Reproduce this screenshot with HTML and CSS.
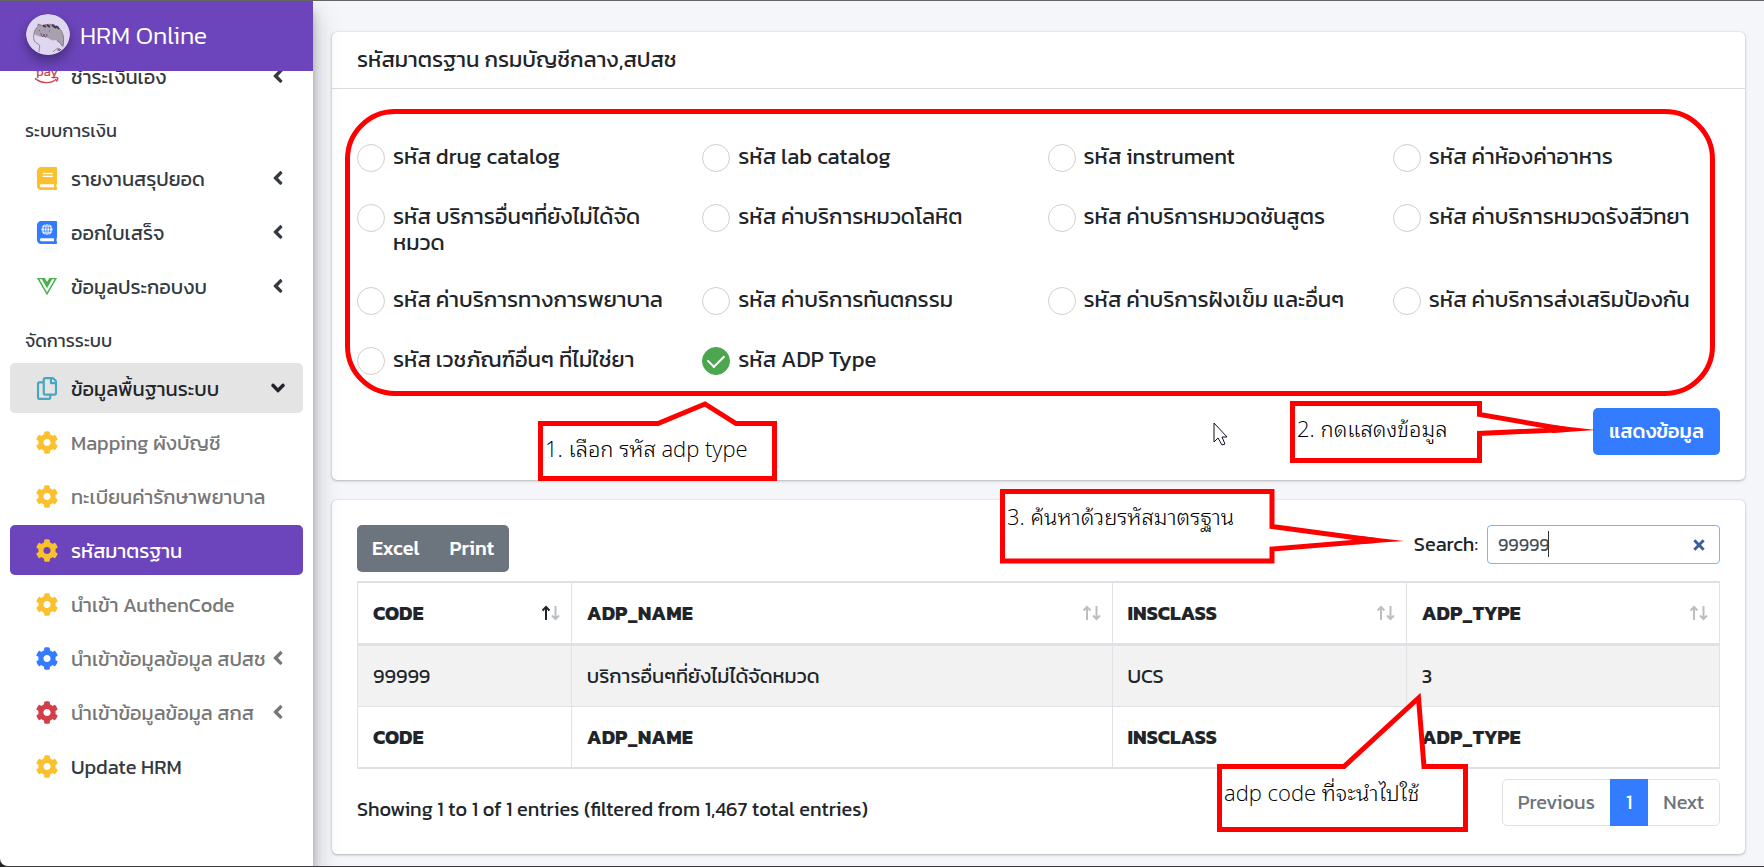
FILE: index.html
```html
<!DOCTYPE html>
<html lang="th">
<head>
<meta charset="utf-8">
<title>HRM Online</title>
<link rel="stylesheet" href="styles.css">
</head>
<body>
<svg class="defs" aria-hidden="true">
  <defs>
    <symbol id="gear" viewBox="0 0 512 512"><path d="M487.400 315.700l-42.600-24.600c4.300-23.200 4.300-47 0-70.200l42.600-24.600c4.900-2.800 7.100-8.600 5.500-14-11.100-35.600-30-67.800-54.700-94.600-3.800-4.100-10-5.100-14.800-2.300L380.800 110c-17.900-15.400-38.500-27.300-60.800-35.100V25.800c0-5.600-3.900-10.500-9.400-11.700-36.700-8.200-74.300-7.800-109.200 0-5.500 1.200-9.400 6.100-9.400 11.700V75c-22.200 7.900-42.800 19.800-60.800 35.100L88.700 85.500c-4.900-2.800-11-1.900-14.800 2.300-24.700 26.700-43.600 58.900-54.700 94.600-1.700 5.400.6 11.200 5.500 14L67.300 221c-4.300 23.200-4.300 47 0 70.200l-42.600 24.600c-4.900 2.800-7.100 8.600-5.500 14 11.100 35.600 30 67.800 54.700 94.600 3.800 4.100 10 5.100 14.800 2.300l42.600-24.600c17.900 15.400 38.500 27.300 60.800 35.100v49.200c0 5.600 3.900 10.500 9.400 11.700 36.700 8.200 74.300 7.800 109.200 0 5.500-1.200 9.400-6.100 9.400-11.700v-49.200c22.200-7.900 42.800-19.800 60.800-35.100l42.600 24.600c4.900 2.800 11 1.900 14.800-2.300 24.700-26.700 43.600-58.900 54.700-94.600 1.500-5.500-.7-11.300-5.600-14.100zM256 336c-44.100 0-80-35.900-80-80s35.900-80 80-80 80 35.900 80 80-35.900 80-80 80z"/></symbol>
    <symbol id="angle" viewBox="0 0 256 512"><path d="M31.700 239l136-136c9.400-9.400 24.600-9.400 33.900 0l22.600 22.600c9.400 9.400 9.400 24.600 0 33.900L127.900 256l96.400 96.400c9.400 9.400 9.400 24.600 0 33.900L201.700 409c-9.400 9.400-24.600 9.400-33.900 0l-136-136c-9.500-9.400-9.500-24.600-.1-34z"/></symbol>
    <symbol id="sort" viewBox="0 0 20 16"><path class="sort-up" d="M5 15V2M1.500 5.500L5 2l3.500 3.500"/><path class="sort-down" d="M14.500 1v13M11 10.500l3.500 3.500 3.500-3.500"/></symbol>
  </defs>
</svg>
<div class="app">
  <aside class="sidebar">
    <a class="brand" href="#">
      <svg class="avatar" viewBox="0 0 44 41" aria-hidden="true">
        <ellipse cx="22" cy="20.500" rx="22" ry="20.500" fill="#dfd7ef"/>
        <path d="M8 20c0-3 2-6 4-7.500V10l4 1.500c4-1.500 9-1.500 13-.5l2 1 2 0v2c3 3 5 8 5 13l-1 7c-2-4-4-7-8-8-4 2-6-3-11-3-4 0-8-2-10-3z" fill="#a8a0ae"/>
        <path d="M8 20c-1 5 0 8 4 10 3 1 1 4 1 8M8 20c0-3 2-6 4-7.500V10l4 1.500c4-1.500 9-1.500 13-.5M31 12c5 4 8 10 6 20M31 27c3 1 4 3 5 5M27 38c2-2 3-3 5-4" stroke="#7d6b80" stroke-width=".8" fill="none"/>
        <path d="M17 11.500l3 1.500M21 11l3 2M26 11l4 3M30 12l3 3" stroke="#3d2f48" stroke-width="1.700" fill="none"/>
        <path d="M15 19c0 4 3 5 3 1 0 4 3 4 3 0M13 16.500h1M23 17h1M31 36h2v-2M33 37l2-2" stroke="#6a4a62" fill="none"/>
      </svg>
      <span class="brand-name">HRM Online</span>
    </a>
    <nav class="menu-view">
      <ul class="menu">
        <li><a class="item" href="#"><svg class="icon red" viewBox="0 0 26 24"><text x="13" y="11" text-anchor="middle" font-size="14">pay</text><path d="M0 14c7 6 17 6 23 1M19 13.500c6-1.500 7 0 4 4" fill="none" stroke="currentColor" stroke-width="1.600"/></svg><span class="label">ชำระเงินเอง</span><svg class="angle"><use href="#angle"/></svg></a></li>
        <li class="heading">ระบบการเงิน</li>
        <li><a class="item" href="#"><svg class="icon yellow" viewBox="0 0 448 512"><path d="M448 360V24c0-13.300-10.700-24-24-24H96C43 0 0 43 0 96v320c0 53 43 96 96 96h328c13.300 0 24-10.700 24-24v-16c0-7.500-3.500-14.300-8.900-18.700-4.200-15.400-4.200-59.300 0-74.700 5.400-4.300 8.900-11.100 8.900-18.600zM128 134c0-3.300 2.700-6 6-6h212c3.300 0 6 2.700 6 6v20c0 3.300-2.700 6-6 6H134c-3.300 0-6-2.700-6-6v-20zm0 64c0-3.300 2.700-6 6-6h212c3.300 0 6 2.700 6 6v20c0 3.300-2.700 6-6 6H134c-3.300 0-6-2.700-6-6v-20zm253.400 250H96c-17.700 0-32-14.300-32-32 0-17.600 14.400-32 32-32h285.400c-1.900 17.100-1.900 46.900 0 64z"/></svg><span class="label">รายงานสรุปยอด</span><svg class="angle"><use href="#angle"/></svg></a></li>
        <li><a class="item" href="#"><svg class="icon blue" viewBox="0 0 448 512"><path d="M448 360V24c0-13.300-10.700-24-24-24H96C43 0 0 43 0 96v320c0 53 43 96 96 96h328c13.300 0 24-10.700 24-24v-16c0-7.500-3.500-14.300-8.900-18.700-4.200-15.400-4.200-59.300 0-74.700 5.400-4.300 8.900-11.100 8.900-18.600zM381.400 448H96c-17.700 0-32-14.300-32-32 0-17.600 14.400-32 32-32h285.400c-1.900 17.100-1.900 46.900 0 64z"/><circle cx="224" cy="188" r="122" fill="#fff"/><path d="M102 152h244M102 224h244M224 66v244M200 66c-46 70-46 174 0 244M248 66c46 70 46 174 0 244" fill="none" stroke="currentColor" stroke-width="17"/></svg><span class="label">ออกใบเสร็จ</span><svg class="angle"><use href="#angle"/></svg></a></li>
        <li><a class="item" href="#"><svg class="icon green" viewBox="0 0 448 512"><path d="M356.900 64.300H280l-56 88.600-48-88.600H0L224 448 448 64.300h-91.100zm-301.200 32h53.800L224 294.500 338.400 96.300h53.800L224 384.500 55.700 96.300z"/></svg><span class="label">ข้อมูลประกอบงบ</span><svg class="angle"><use href="#angle"/></svg></a></li>
        <li class="heading">จัดการระบบ</li>
        <li><a class="item open" href="#"><svg class="icon teal" viewBox="0 0 448 512"><path d="M433.900 65.900l-51.800-51.800A48 48 0 0 0 348.100 0H176c-26.500 0-48 21.500-48 48v48H48c-26.500 0-48 21.500-48 48v320c0 26.500 21.500 48 48 48h224c26.500 0 48-21.500 48-48v-48h80c26.500 0 48-21.500 48-48V99.900a48 48 0 0 0-14.100-34zM266 464H54a6 6 0 0 1-6-6V150a6 6 0 0 1 6-6h74v224c0 26.500 21.500 48 48 48h96v42a6 6 0 0 1-6 6zm128-96H182a6 6 0 0 1-6-6V54a6 6 0 0 1 6-6h106v88c0 13.300 10.700 24 24 24h88v202a6 6 0 0 1-6 6zm6-256h-64V48h9.600c1.600 0 3.100.6 4.200 1.800l48.400 48.400a6 6 0 0 1 1.800 4.200V112z"/></svg><span class="label">ข้อมูลพื้นฐานระบบ</span><svg class="angle down"><use href="#angle"/></svg></a></li>
        <li><a class="item sub" href="#"><svg class="icon yellow"><use href="#gear"/></svg><span class="label">Mapping ผังบัญชี</span></a></li>
        <li><a class="item sub" href="#"><svg class="icon yellow"><use href="#gear"/></svg><span class="label">ทะเบียนค่ารักษาพยาบาล</span></a></li>
        <li><a class="item active" href="#"><svg class="icon yellow"><use href="#gear"/></svg><span class="label">รหัสมาตรฐาน</span></a></li>
        <li><a class="item sub" href="#"><svg class="icon yellow"><use href="#gear"/></svg><span class="label">นำเข้า AuthenCode</span></a></li>
        <li><a class="item sub" href="#"><svg class="icon blue"><use href="#gear"/></svg><span class="label">นำเข้าข้อมูลข้อมูล สปสช</span><svg class="angle"><use href="#angle"/></svg></a></li>
        <li><a class="item sub" href="#"><svg class="icon red"><use href="#gear"/></svg><span class="label">นำเข้าข้อมูลข้อมูล สกส</span><svg class="angle"><use href="#angle"/></svg></a></li>
        <li><a class="item" href="#"><svg class="icon yellow"><use href="#gear"/></svg><span class="label">Update HRM</span></a></li>
      </ul>
    </nav>
  </aside>
  <main class="content">
    <form class="card">
      <h1 class="card-title">รหัสมาตรฐาน กรมบัญชีกลาง,สปสช</h1>
      <div class="card-body">
        <div class="options">
          <label class="option"><input type="radio" name="code"><span>รหัส drug catalog</span></label>
          <label class="option"><input type="radio" name="code"><span>รหัส lab catalog</span></label>
          <label class="option"><input type="radio" name="code"><span>รหัส instrument</span></label>
          <label class="option"><input type="radio" name="code"><span>รหัส ค่าห้องค่าอาหาร</span></label>
          <label class="option"><input type="radio" name="code"><span>รหัส บริการอื่นๆที่ยังไม่ได้จัด<wbr>หมวด</span></label>
          <label class="option"><input type="radio" name="code"><span>รหัส ค่าบริการหมวดโลหิต</span></label>
          <label class="option"><input type="radio" name="code"><span>รหัส ค่าบริการหมวดชันสูตร</span></label>
          <label class="option"><input type="radio" name="code"><span>รหัส ค่าบริการหมวดรังสีวิทยา</span></label>
          <label class="option"><input type="radio" name="code"><span>รหัส ค่าบริการทางการพยาบาล</span></label>
          <label class="option"><input type="radio" name="code"><span>รหัส ค่าบริการทันตกรรม</span></label>
          <label class="option"><input type="radio" name="code"><span>รหัส ค่าบริการฝังเข็ม และอื่นๆ</span></label>
          <label class="option"><input type="radio" name="code"><span>รหัส ค่าบริการส่งเสริมป้องกัน</span></label>
          <label class="option"><input type="radio" name="code"><span>รหัส เวชภัณฑ์อื่นๆ ที่ไม่ใช่ยา</span></label>
          <label class="option"><input type="radio" name="code" checked><span>รหัส ADP Type</span></label>
        </div>
        <div class="actions"><button class="btn primary" type="button">แสดงข้อมูล</button></div>
      </div>
    </form>
    <section class="card results">
      <div class="toolbar">
        <div class="btn-group"><button class="btn" type="button">Excel</button><button class="btn" type="button">Print</button></div>
        <label class="search">Search:
          <span class="search-box"><input type="text" value="99999"><span class="caret"></span><svg class="clear" viewBox="0 0 12 12"><path d="M2 2l8 8M10 2l-8 8"/></svg></span>
        </label>
      </div>
      <table class="data">
        <colgroup><col class="c1"><col class="c2"><col class="c3"><col class="c4"></colgroup>
        <thead><tr>
          <th><div class="th">CODE<svg class="sort asc"><use href="#sort"/></svg></div></th>
          <th><div class="th">ADP_NAME<svg class="sort"><use href="#sort"/></svg></div></th>
          <th><div class="th">INSCLASS<svg class="sort"><use href="#sort"/></svg></div></th>
          <th><div class="th">ADP_TYPE<svg class="sort"><use href="#sort"/></svg></div></th>
        </tr></thead>
        <tbody><tr><td>99999</td><td>บริการอื่นๆที่ยังไม่ได้จัดหมวด</td><td>UCS</td><td>3</td></tr></tbody>
        <tfoot><tr><th>CODE</th><th>ADP_NAME</th><th>INSCLASS</th><th>ADP_TYPE</th></tr></tfoot>
      </table>
      <div class="footer">
        <p class="info">Showing 1 to 1 of 1 entries (filtered from 1,467 total entries)</p>
        <div class="pages"><a href="#">Previous</a><a class="current" href="#">1</a><a href="#">Next</a></div>
      </div>
    </section>
  </main>
  <div class="notes">
    <div class="ring"></div>
    <div class="note n1"><svg viewBox="0 0 240 80"><path d="M2.500 22.500H120L167 3l31 19.500h38.500v55H2.500z"/></svg><p>1. เลือก รหัส adp type</p></div>
    <div class="note n2"><svg viewBox="0 0 310 64"><path d="M2.500 2.500h187v11L276 28.500l-86.500 4v27H2.500z"/><path class="tip" d="M262 24l44 5-44 3z"/></svg><p>2. กดแสดงข้อมูล</p></div>
    <div class="note n3"><svg viewBox="0 0 406 76"><path d="M2.500 2.500H272v35L376 51.500 272 60v12H2.500z"/><path class="tip" d="M360 47l44 5-44 3z"/></svg><p>3. ค้นหาด้วยรหัสมาตรฐาน</p></div>
    <div class="note n4"><svg viewBox="0 0 252 140"><path d="M2.500 74.500H127L201.500 6l5.500 68.500h41.500v63H2.500z"/></svg><p>adp code ที่จะนำไปใช้</p></div>
    <svg class="pointer" viewBox="0 0 15 25"><path d="M1 1v19l4-4 4 7 3-1-3-7h5z"/></svg>
  </div>
</div>
</body>
</html>
```
FILE: styles.css
```css
* { box-sizing: border-box; }
body {
  margin: 0;
  background: #222;
  color: #212529;
  font-family: Kanit, Roboto, "Noto Sans Thai", "Noto Sans", sans-serif;
  font-size: 20px;
  line-height: 30px;
}
a { color: inherit; text-decoration: none; }
p, h1, ul { margin: 0; padding: 0; font-weight: 400; }
ul { list-style: none; }
button, input { font: inherit; }
.defs { position: absolute; width: 0; height: 0; }
.app {
  position: relative;
  display: flex;
  min-height: 100vh;
  border-top: 1px solid #666;
  border-bottom: 1px solid #3c3c40;
  border-bottom-left-radius: 8px;
  background: #f4f6f9;
}

.sidebar {
  position: relative;
  z-index: 1;
  flex: 0 0 313px;
  background: #fff;
  border-bottom-left-radius: 8px;
  box-shadow: 0 14px 28px rgba(0,0,0,.25), 0 10px 10px rgba(0,0,0,.22);
  clip-path: inset(0 -60px 0 0 round 0 0 0 8px);
}
.brand {
  position: relative;
  z-index: 1;
  display: flex;
  align-items: center;
  gap: 10px;
  height: 70px;
  padding: 0 26px 3px;
  background: #6c45bc;
  color: #fff;
  font-size: 25px;
  font-weight: 300;
}
.avatar { width: 44px; height: 41px; border-radius: 50%; box-shadow: 0 6px 12px rgba(0,0,0,.35); }
.menu-view { overflow: hidden; }
.menu { margin-top: -20px; padding: 0 10px; }
.item {
  display: flex;
  align-items: center;
  height: 50px;
  margin-bottom: 4px;
  padding: 0 18px 0 25px;
  border-radius: 5px;
  color: #343a40;
  font-size: 20px;
  white-space: nowrap;
}
.item.sub { color: #777; }
.item.open { background: #e4e4e4; color: #212529; }
.item.active { background: #6c45bc; color: #fff; }
.heading { height: 48px; padding: 12px 15px 0; font-size: 18px; line-height: 27px; color: #343a40; }
.icon { flex: none; width: 24px; height: 23px; margin-right: 12px; fill: currentColor; overflow: visible; }
.label { flex: 1; padding-top: 1px; }
.angle { width: 14px; height: 22px; fill: currentColor; }
.angle.down { transform: rotate(-90deg); }
.yellow { color: #fbc02d; }
.blue { color: #337bff; }
.red { color: #d23f4b; }
.green { color: #4caf50; }
.teal { color: #48a7bf; }

.content { flex: 1; min-width: 0; padding: 31px 19px 12px; }
.card {
  display: block;
  margin-bottom: 20px;
  background: #fff;
  border-radius: 5px;
  box-shadow: 0 0 1px rgba(0,0,0,.2), 0 1px 3px rgba(0,0,0,.25);
}
.card:last-child { margin-bottom: 0; }
.card-title { padding: 14px 25px 15px; border-bottom: 1px solid #dcdcdc; font-size: 22px; line-height: 27px; }
.card-body { padding: 55px 25px 25px; }
.options { display: grid; grid-template-columns: repeat(4, 1fr); column-gap: 18px; row-gap: 30px; }
.option { display: flex; align-items: flex-start; gap: 8px; min-height: 30px; font-size: 22px; line-height: 1.2; }
.option input {
  flex: none;
  appearance: none;
  display: grid;
  place-items: center;
  width: 28px;
  height: 28px;
  margin: 0;
  border: 1px solid #d3cfc8;
  border-radius: 50%;
  background: #fff;
}
.option input:checked { border-color: #4ba64f; background: #4ba64f; }
.option input:checked::before {
  content: "";
  width: 14px;
  height: 8px;
  margin-bottom: 4px;
  border: solid #fff;
  border-width: 0 0 2px 2px;
  transform: rotate(-45deg);
}
.actions { display: flex; justify-content: flex-end; margin-top: 31px; }
.btn { height: 47px; padding: 0 15px; border: 0; background: #6c757d; color: #fff; font-weight: 500; }
.btn.primary { padding: 0 16px; border-radius: 5px; background: #337bff; }
.btn-group { display: flex; overflow: hidden; border-radius: 5px; }
.results { padding: 25px 25px 28px; }
.toolbar { display: flex; justify-content: space-between; align-items: flex-start; margin-bottom: 9px; }
.search { display: flex; align-items: center; gap: 9px; }
.search-box { position: relative; display: flex; width: 233px; }
.search input { width: 100%; height: 39px; padding: 0 10px; border: 1px solid #80b0ff; border-radius: 4px; color: #495057; font-size: 18px; outline: 0; }
.caret { position: absolute; left: 61px; top: 6px; width: 1px; height: 26px; background: #333; }
.clear { position: absolute; right: 14px; top: 13px; width: 14px; height: 14px; stroke: #3a5f9c; stroke-width: 2.500; fill: none; }
.data { width: 100%; border-collapse: collapse; table-layout: fixed; }
.c1 { width: 15.700%; } .c2 { width: 39.700%; } .c3 { width: 21.600%; }
.data th, .data td { height: 62px; padding: 0 15px; border: 1px solid #dee2e6; text-align: left; }
.data thead th { height: 63px; border-top-width: 2px; border-bottom-width: 3px; }
.data tfoot th { height: 61px; border-bottom-width: 2px; }
.data tbody { background: #f2f2f2; }
.th { display: flex; justify-content: space-between; align-items: center; }
.sort { --up: #bcbec0; width: 20px; height: 16px; margin-right: -5px; fill: none; stroke: #bcbec0; stroke-width: 2; }
.sort.asc { --up: #212529; }
.sort-up { stroke: var(--up); }
.footer { display: flex; justify-content: space-between; align-items: flex-start; margin-top: 10px; }
.info { padding-top: 15px; }
.pages { display: flex; border: 1px solid #dee2e6; border-radius: 5px; color: #6c757d; line-height: 45px; }
.pages a { padding: 0 15px; }
.pages .current { margin: -1px 0; padding: 1px 16px; background: #337bff; color: #fff; }

.notes { position: absolute; inset: 0; z-index: 2; pointer-events: none; color: #000; }
.ring { position: absolute; left: 345px; right: 49px; top: 108px; height: 287px; border: 5px solid red; border-radius: 50px; }
.note { position: absolute; font-family: "Leelawadee UI", "Open Sans", "Noto Sans Thai Looped", "Noto Looped Thai", Sarabun, Loma, "Noto Sans Thai", sans-serif; font-size: 22px; }
.note svg { display: block; width: 100%; height: 100%; fill: #fff; stroke: red; stroke-width: 5; }
.note .tip { fill: red; stroke: none; }
.note p { position: absolute; left: 7px; font-weight: 300; white-space: nowrap; }
.n1 { left: 538px; top: 400px; width: 240px; height: 80px; } .n1 p { top: 32px; }
.n2 { left: 1290px; top: 400px; width: 310px; height: 64px; } .n2 p { top: 12px; }
.n3 { left: 1000px; top: 488px; width: 406px; height: 76px; } .n3 p { top: 12px; }
.n4 { left: 1217px; top: 691px; width: 252px; height: 140px; } .n4 p { top: 85px; }
.pointer { position: absolute; left: 1213px; top: 421px; width: 15px; height: 25px; fill: #fff; stroke: #112; stroke-width: 1; }
```
